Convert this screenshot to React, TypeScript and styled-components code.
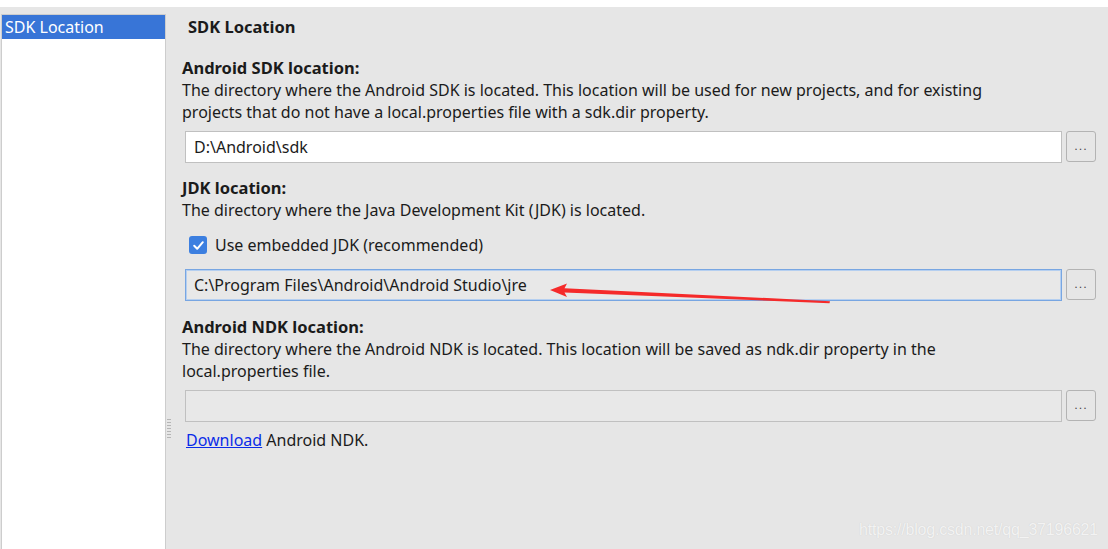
import React from "react";
import styled, { createGlobalStyle } from "styled-components";

const Global = createGlobalStyle`
  html, body { margin: 0; padding: 0; background: #ffffff; }
  body { font-family: "Noto Sans", "Open Sans", sans-serif; color: #1b1b1b; }
`;

const Page = styled.div`
  position: relative;
  width: 1108px;
  height: 549px;
  overflow: hidden;
  padding-top: 7px;
  box-sizing: border-box;
`;

const Window = styled.div`
  display: flex;
  height: 542px;
  background: #e6e6e6;
`;

const Sidebar = styled.div`
  position: relative;
  width: 163px;
  margin: 7px 0 0 1px;
  background: #ffffff;
  border: 1px solid #cdcdcd;
  border-bottom: none;
  flex-shrink: 0;
`;

const NavItem = styled.div<{ $active?: boolean }>`
  height: 24px;
  line-height: 24px;
  padding-left: 3px;
  font-size: 16px;
  background: ${(p) => (p.$active ? "#3875d7" : "transparent")};
  color: ${(p) => (p.$active ? "#ffffff" : "#1b1b1b")};
  white-space: nowrap;
`;

const Grip = styled.div`
  position: absolute;
  right: -6px;
  top: 403px;
  width: 4px;
  height: 20px;
  background-image: radial-gradient(circle, #b5b5b5 0.8px, transparent 1px);
  background-size: 2px 3px;
`;

const Main = styled.div`
  flex: 1;
  padding: 9px 12px 0 16px;
  display: flex;
  flex-direction: column;
`;

const Title = styled.div`
  font-weight: 700;
  font-size: 16.5px;
  line-height: 22px;
  padding-left: 6px;
  white-space: nowrap;
`;

const Heading = styled.div<{ $mt: number }>`
  margin-top: ${(p) => p.$mt}px;
  font-weight: 700;
  font-size: 16.5px;
  line-height: 22px;
  white-space: nowrap;
`;

const Desc = styled.div`
  font-size: 16px;
  line-height: 22px;
  white-space: nowrap;
`;

const FieldRow = styled.div<{ $mt: number }>`
  margin-top: ${(p) => p.$mt}px;
  display: flex;
  gap: 4px;
  padding-left: 3px;
  height: 32px;
`;

const Field = styled.div<{ $variant: "normal" | "focused" | "disabled" }>`
  flex: 1;
  box-sizing: border-box;
  height: 32px;
  display: flex;
  align-items: center;
  padding-left: 8px;
  font-size: 16px;
  white-space: nowrap;
  background: ${(p) => (p.$variant === "normal" ? "#ffffff" : "#e8e8e8")};
  border: 1px solid
    ${(p) => (p.$variant === "focused" ? "#78a6e2" : "#c0c0c0")};
  box-shadow: ${(p) =>
    p.$variant === "focused" ? "inset 0 0 0 1px #b5cff0" : "none"};
  color: #1b1b1b;
`;

const BrowseButton = styled.div`
  width: 30px;
  height: 31px;
  box-sizing: border-box;
  border: 1px solid #b3b3b3;
  border-radius: 3px;
  background: #e6e6e6;
  display: flex;
  align-items: center;
  justify-content: center;
  font-size: 11px;
  letter-spacing: 1px;
  color: #444;
  font-family: "DejaVu Sans", sans-serif;
`;

const CheckRow = styled.div`
  margin-top: 13px;
  height: 22px;
  display: flex;
  align-items: center;
  gap: 8px;
  padding-left: 7px;
  font-size: 16px;
  white-space: nowrap;
`;

const CheckBox = styled.div`
  width: 18px;
  height: 18px;
  border-radius: 3px;
  background: #3c7fe0;
  display: flex;
  align-items: center;
  justify-content: center;
`;

const LinkLine = styled.div`
  margin-top: 7px;
  padding-left: 4px;
  font-size: 16px;
  line-height: 22px;
  white-space: nowrap;
`;

const Link = styled.a`
  color: #0b2ce8;
  text-decoration: underline;
`;

const Watermark = styled.div`
  position: absolute;
  right: 10px;
  bottom: 10px;
  font-family: "Liberation Sans", Arial, sans-serif;
  font-size: 16px;
  color: #f3f3f3;
  text-shadow: 0 0 1px #c9c9c9;
  letter-spacing: -0.2px;
`;

const ArrowSvg = styled.svg`
  position: absolute;
  left: 0;
  top: 0;
  pointer-events: none;
`;

export default function App() {
  return (
    <Page>
      <Global />
      <Window>
        <Sidebar>
          <NavItem $active>SDK Location</NavItem>
          <Grip />
        </Sidebar>
        <Main>
          <Title>SDK Location</Title>

          <Heading $mt={19}>Android SDK location:</Heading>
          <Desc>
            The directory where the Android SDK is located. This location will be used for new projects, and for existing
          </Desc>
          <Desc>projects that do not have a local.properties file with a sdk.dir property.</Desc>
          <FieldRow $mt={8}>
            <Field $variant="normal">D:\Android\sdk</Field>
            <BrowseButton>...</BrowseButton>
          </FieldRow>

          <Heading $mt={14}>JDK location:</Heading>
          <Desc>The directory where the Java Development Kit (JDK) is located.</Desc>
          <CheckRow>
            <CheckBox>
              <svg width="13" height="13" viewBox="0 0 13 13">
                <path d="M2.2 6.8 L5.2 9.8 L10.8 3.2" fill="none" stroke="#ffffff" strokeWidth="2" strokeLinecap="round" strokeLinejoin="round" />
              </svg>
            </CheckBox>
            Use embedded JDK (recommended)
          </CheckRow>
          <FieldRow $mt={13}>
            <Field $variant="focused">C:\Program Files\Android\Android Studio\jre</Field>
            <BrowseButton>...</BrowseButton>
          </FieldRow>

          <Heading $mt={15}>Android NDK location:</Heading>
          <Desc>
            The directory where the Android NDK is located. This location will be saved as ndk.dir property in the
          </Desc>
          <Desc>local.properties file.</Desc>
          <FieldRow $mt={8}>
            <Field $variant="disabled" />
            <BrowseButton>...</BrowseButton>
          </FieldRow>
          <LinkLine>
            <Link href="#">Download</Link> Android NDK.
          </LinkLine>
        </Main>
      </Window>
      <ArrowSvg width="1108" height="549">
        <polygon
          points="550,290 567,283.5 564.5,288.2 830,301.2 829.5,303.2 564.5,292.6 567,297"
          fill="#f52a2a"
        />
      </ArrowSvg>
      <Watermark>https://blog.csdn.net/qq_37196621</Watermark>
    </Page>
  );
}
